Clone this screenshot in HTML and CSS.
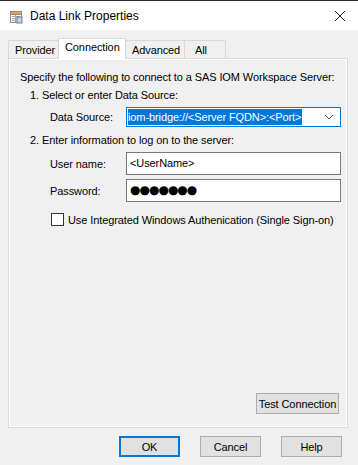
FILE: index.html
```html
<!DOCTYPE html>
<html lang="en">
<head>
    <meta charset="UTF-8">
    <title>Data Link Properties</title>
    <link rel="stylesheet" href="styles.css">
</head>
<body>
    <div class="window">
        <div class="titlebar">
            <svg class="app-icon" width="16" height="16" viewBox="0 0 16 16">
                <rect x="2.5" y="3.5" width="11" height="11" fill="#fff" stroke="#8a8a8a"/>
                <rect x="2.5" y="3.5" width="11" height="3" fill="#e3a05a" stroke="#8a8a8a"/>
                <path d="M4 8.5h8M4 10.5h8M4 12.5h8M7.5 7v7" stroke="#9aa7b8" stroke-width="1"/>
                <rect x="9" y="9" width="5" height="6" fill="#c9d4e2" stroke="#6b7b90"/>
            </svg>
            <span class="title">Data Link Properties</span>
            <span class="close">
                <svg width="12" height="12" viewBox="0 0 12 12">
                    <path d="M1 1L11 11M11 1L1 11" stroke="#222" stroke-width="1"/>
                </svg>
            </span>
        </div>

        <div class="body">
            <div class="tabs">
                <div class="tab tab-provider">Provider</div>
                <div class="tab tab-connection active">Connection</div>
                <div class="tab tab-advanced">Advanced</div>
                <div class="tab tab-all">All</div>
            </div>

            <div class="panel">
                <p class="intro">Specify the following to connect to a SAS IOM Workspace Server:</p>
                <p class="step">1. Select or enter Data Source:</p>
                <div class="row">
                    <label>Data Source:</label>
                    <div class="combo">
                        <span class="selected">iom-bridge://&lt;Server FQDN&gt;:&lt;Port&gt;</span>
                        <svg class="arrow" width="10" height="6" viewBox="0 0 10 6">
                            <path d="M1 1L5 5L9 1" stroke="#555" fill="none"/>
                        </svg>
                    </div>
                </div>
                <p class="step step-two">2. Enter information to log on to the server:</p>
                <div class="row">
                    <label>User name:</label>
                    <div class="field">&lt;UserName&gt;</div>
                </div>
                <div class="row">
                    <label>Password:</label>
                    <div class="field dots">●●●●●●●</div>
                </div>
                <div class="check-row">
                    <span class="checkbox"></span>
                    <span>Use Integrated Windows Authenication (Single Sign-on)</span>
                </div>
                <div class="test-row">
                    <button class="btn test">Test Connection</button>
                </div>
            </div>

            <div class="buttons">
                <button class="btn default">OK</button>
                <button class="btn">Cancel</button>
                <button class="btn">Help</button>
            </div>
        </div>
    </div>
</body>
</html>
```

FILE: styles.css
```css
body {
    margin: 0;
    padding: 0;
    font-family: "Liberation Sans", Arial, sans-serif;
    font-size: 11px;
    letter-spacing: -0.1px;
    color: #000;
    background: #f0f0f0;
    white-space: nowrap;
}
.window {
    width: 358px;
    height: 465px;
    border-top: 1px solid #2b2b2b;
    box-sizing: border-box;
    background: #f0f0f0;
}
.titlebar {
    height: 29px;
    background: #fff;
    display: flex;
    align-items: center;
    padding-left: 8px;
    letter-spacing: 0;
}
.app-icon {
    margin-right: 6px;
}
.title {
    font-size: 12px;
    flex: 1;
}
.close {
    width: 36px;
    display: flex;
    justify-content: center;
}
.body {
    padding: 9px 10px 0 8px;
}
.tabs {
    display: flex;
    height: 19px;
    align-items: flex-end;
}
.tab {
    height: 18px;
    box-sizing: border-box;
    border: 1px solid #d9d9d9;
    border-bottom: none;
    border-right: none;
    padding: 3px 0 0 6px;
    background: #f0f0f0;
}
.tab-provider {
    width: 50px;
}
.tab-connection {
    width: 68px;
}
.tab-advanced {
    width: 58px;
}
.tab-all {
    width: 42px;
    padding-left: 10px;
    border-right: 1px solid #d9d9d9;
}
.tab.active {
    height: 21px;
    background: #fff;
    border-right: 1px solid #d9d9d9;
    padding-top: 2px;
    margin-bottom: -1px;
    position: relative;
    z-index: 1;
}
.tab.active + .tab {
    border-left: none;
}
.panel {
    height: 370px;
    box-sizing: border-box;
    border: 1px solid #d9d9d9;
    box-shadow: inset 1px 1px 0 #fff, inset -1px -1px 0 #fff;
    padding: 11px 0 0 11px;
    display: flex;
    flex-direction: column;
}
.intro {
    margin: 0;
    line-height: 15px;
}
.step {
    margin: 3px 0 0 10px;
    line-height: 15px;
}
.step-two {
    margin-top: 6px;
}
.row {
    display: flex;
    align-items: center;
    margin-top: 4px;
    margin-left: 30px;
}
.row label {
    width: 76px;
}
.combo {
    width: 215px;
    height: 20px;
    box-sizing: border-box;
    border: 1px solid #0078d7;
    background: #fff;
    display: flex;
    align-items: center;
    padding-left: 1px;
}
.selected {
    background: #0078d7;
    color: #fff;
    line-height: 16px;
    padding-right: 1px;
}
.arrow {
    margin-left: auto;
    margin-right: 6px;
}
.field {
    width: 215px;
    height: 23px;
    box-sizing: border-box;
    border: 1px solid #7a7a7a;
    background: #fff;
    padding: 3px 3px;
    line-height: 15px;
}
.dots {
    font-family: "DejaVu Sans", sans-serif;
    font-size: 12px;
    letter-spacing: -1px;
}
.check-row {
    display: flex;
    align-items: center;
    margin: 11px 0 0 31px;
}
.checkbox {
    width: 13px;
    height: 13px;
    box-sizing: border-box;
    border: 1px solid #333;
    background: #fff;
    margin-right: 4px;
}
.test-row {
    margin-top: auto;
    margin-bottom: 13px;
    display: flex;
    justify-content: flex-end;
    padding-right: 8px;
}
.btn {
    font-family: "Liberation Sans", Arial, sans-serif;
    font-size: 11px;
    letter-spacing: -0.1px;
    height: 21px;
    width: 61px;
    background: #e1e1e1;
    border: 1px solid #adadad;
    padding: 0;
    color: #000;
}
.btn.test {
    width: 83px;
}
.buttons {
    display: flex;
    justify-content: flex-end;
    gap: 20px;
    margin-top: 8px;
    padding-right: 6px;
}
.btn.default {
    border: 2px solid #0078d7;
}
```
